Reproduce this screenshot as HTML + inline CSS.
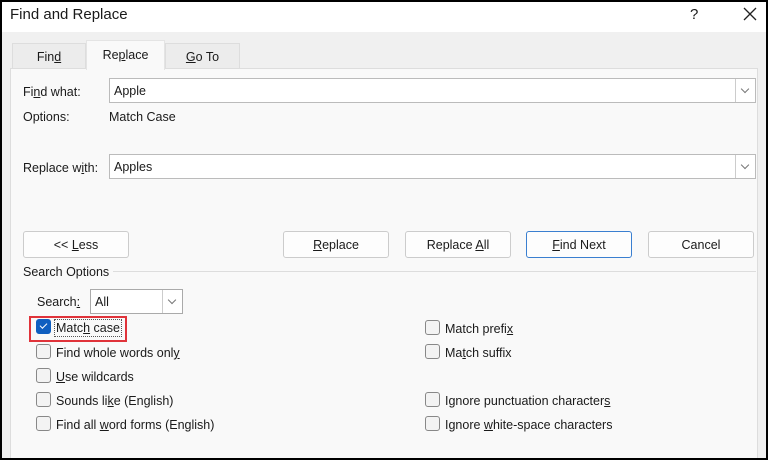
<!DOCTYPE html>
<html><head><meta charset="utf-8"><style>
*{margin:0;padding:0;box-sizing:border-box}
body{width:768px;height:460px;background:#000;position:relative;overflow:hidden;font-family:"Liberation Sans",sans-serif;font-size:12.5px;color:#1a1a1a}
.win{position:absolute;left:2px;top:2px;width:764px;height:456px;background:#f0f0f0}
.title{position:absolute;background:#fff}
.a{position:absolute;white-space:nowrap}
.panel{position:absolute;left:10px;top:68px;width:748px;height:390px;background:#f9f9f9;border-left:1px solid #ddd;border-top:1px solid #ddd;border-right:1px solid #ddd}
.tab{position:absolute;top:43px;height:26px;background:#ececec;border:1px solid #ddd;border-bottom:none;text-align:center;line-height:27px}
.inp{position:absolute;background:#fff;border:1px solid #bbb;height:25px;padding-left:4px;line-height:24px}
.dd{position:absolute;right:0;top:0;width:20px;height:23px;border-left:1px solid #ccc}
.dd:after{content:"";position:absolute;left:6px;top:7px;width:5px;height:5px;border-right:1px solid #777;border-bottom:1px solid #777;transform:rotate(45deg)}
.btn{position:absolute;top:231px;height:27px;width:106px;background:#fdfdfd;border:1px solid #ccc;border-radius:3px;text-align:center;line-height:27px}
.cb{position:absolute;width:15px;height:15px;border:1px solid #888;border-radius:3px;background:#f3f3f3}
u{text-decoration:underline}
</style></head><body>
<div class="win"></div>
<div class="title" style="left:2px;top:2px;width:764px;height:30px"></div>
<div class="a" style="left:10px;top:6px;font-size:15px">Find and Replace</div>
<div class="a" style="left:690px;top:6px;font-size:15px">?</div>
<svg class="a" style="left:743px;top:7px" width="14" height="14"><path d="M1 1L13 13M13 1L1 13" stroke="#222" stroke-width="1.3"/></svg>
<div class="tab" style="left:12px;width:74px">Fin<u>d</u></div>
<div class="tab" style="left:165px;width:75px"><u>G</u>o To</div>
<div class="panel"></div>
<div class="tab" style="left:86px;top:40px;width:79px;height:30px;background:#f9f9f9;line-height:29px;z-index:2;border-color:#e4e4e4">Re<u>p</u>lace</div>
<div class="a" style="left:23px;top:85px">Fi<u>n</u>d what:</div>
<div class="inp" style="left:109px;top:78px;width:647px">Apple<div class="dd"></div></div>
<div class="a" style="left:23px;top:110px">Options:</div>
<div class="a" style="left:109px;top:110px">Match Case</div>
<div class="a" style="left:23px;top:161px">Replace w<u>i</u>th:</div>
<div class="inp" style="left:109px;top:154px;width:647px">Apples<div class="dd"></div></div>
<div class="btn" style="left:23px">&lt;&lt; <u>L</u>ess</div>
<div class="btn" style="left:283px"><u>R</u>eplace</div>
<div class="btn" style="left:405px">Replace <u>A</u>ll</div>
<div class="btn" style="left:526px;border-color:#3a7fd0"><u>F</u>ind Next</div>
<div class="btn" style="left:648px">Cancel</div>
<div class="a" style="left:23px;top:265px">Search Options</div>
<div class="a" style="left:113px;top:271px;width:643px;height:1px;background:#ddd"></div>
<div class="a" style="left:37px;top:295px">Search<u>:</u></div>
<div class="inp" style="left:90px;top:289px;width:93px;border-color:#aaa">All<div class="dd"></div></div>
<div class="a" style="left:29px;top:316px;width:98px;height:26px;border:2px solid #e0333a"></div>
<div class="cb" style="left:36px;top:319px;background:#0f5fc0;border-color:#0f5fc0"></div>
<div class="a" style="left:40px;top:323px;width:7px;height:4px;border-left:1.5px solid #fff;border-bottom:1.5px solid #fff;transform:rotate(-45deg)"></div>
<div class="a" style="left:54px;top:319px;border:1px dotted #555;padding:0 1px;height:18px;line-height:17px">Matc<u>h</u> case</div>
<div class="cb" style="left:36px;top:344px"></div><div class="a" style="left:56px;top:346px">Find whole words onl<u>y</u></div>
<div class="cb" style="left:36px;top:368px"></div><div class="a" style="left:56px;top:370px"><u>U</u>se wildcards</div>
<div class="cb" style="left:36px;top:392px"></div><div class="a" style="left:56px;top:394px">Sounds li<u>k</u>e (English)</div>
<div class="cb" style="left:36px;top:416px"></div><div class="a" style="left:56px;top:418px">Find all <u>w</u>ord forms (English)</div>
<div class="cb" style="left:425px;top:320px"></div><div class="a" style="left:445px;top:322px">Match prefi<u>x</u></div>
<div class="cb" style="left:425px;top:344px"></div><div class="a" style="left:445px;top:346px">Ma<u>t</u>ch suffix</div>
<div class="cb" style="left:425px;top:392px"></div><div class="a" style="left:445px;top:394px">Ignore punctuation character<u>s</u></div>
<div class="cb" style="left:425px;top:416px"></div><div class="a" style="left:445px;top:418px">Ignore <u>w</u>hite-space characters</div>
</body></html>
